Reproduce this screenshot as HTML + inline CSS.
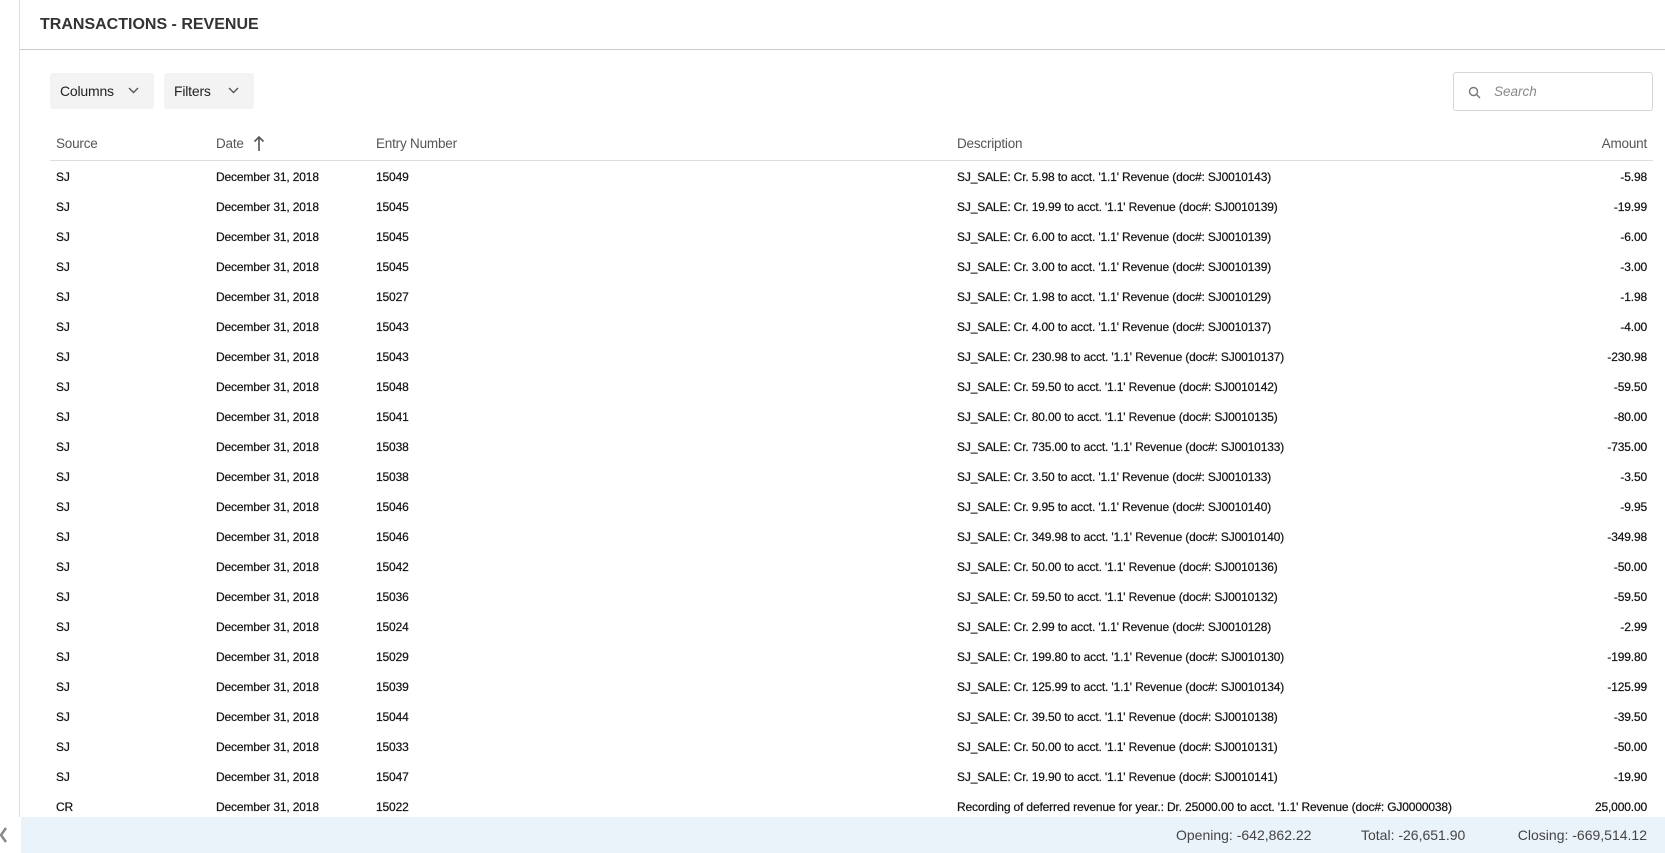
<!DOCTYPE html>
<html><head><meta charset="utf-8"><style>
*{margin:0;padding:0;box-sizing:border-box}
body{width:1665px;height:853px;overflow:hidden;background:#fff;font-family:"Liberation Sans",sans-serif;color:#111;position:relative}
.side{position:absolute;left:0;top:0;width:20px;height:817px;border-right:1px solid #ddd}
.title{position:absolute;left:40px;top:16px;font-size:16px;font-weight:bold;color:#333}
.hl{position:absolute;left:20px;right:0;top:49px;border-top:1px solid #ccc}
.btn{position:absolute;top:73px;height:36px;background:#f3f3f3;border-radius:3px;font-size:14px;line-height:36px;padding-left:10px;color:#222;letter-spacing:-.2px}
.btn svg{position:absolute;top:14px}
.search{position:absolute;left:1453px;top:72px;width:200px;height:39px;border:1px solid #d6d6d6;border-radius:3px}
.search span{position:absolute;left:40px;top:11px;font-style:italic;color:#888;font-size:13.5px}
.th{position:absolute;top:136px;font-size:13.5px;color:#555;letter-spacing:-.2px}
.tl{position:absolute;left:50px;width:1603px;top:160px;border-top:1px solid #ddd}
.r{position:absolute;left:0;width:1665px;height:30px;font-size:12px;line-height:30px;letter-spacing:-.15px;-webkit-text-stroke:.2px #111}
.r span{position:absolute}
.c1{left:56px}.c2{left:216px}.c3{left:376px}.c4{left:957px}.c5{right:18px}
.foot{position:absolute;left:21px;right:0;top:817px;height:36px;background:#eaf2fa;font-size:14px;color:#444}
.foot span{position:absolute;top:10px}
</style></head><body>
<div class="side"></div>
<svg style="position:absolute;left:0;top:826px" width="8" height="18"><path d="M6 2 L1 9 L6 16" stroke="#888" stroke-width="2.5" fill="none"/></svg>
<div class="title">TRANSACTIONS - REVENUE</div>
<div class="hl"></div>
<div class="btn" style="left:50px;width:104px">Columns<svg style="left:78px" width="11" height="7"><path d="M1 1l4.5 4.5L10 1" stroke="#555" stroke-width="1.4" fill="none"/></svg></div>
<div class="btn" style="left:164px;width:90px">Filters<svg style="left:64px" width="11" height="7"><path d="M1 1l4.5 4.5L10 1" stroke="#555" stroke-width="1.4" fill="none"/></svg></div>
<div class="search"><svg style="position:absolute;left:14px;top:13px" width="13" height="13"><circle cx="5.5" cy="5.5" r="4" stroke="#777" stroke-width="1.4" fill="none"/><path d="M8.5 8.5l3.5 3.5" stroke="#777" stroke-width="1.4"/></svg><span>Search</span></div>
<div class="th" style="left:56px">Source</div>
<div class="th" style="left:216px">Date</div>
<svg style="position:absolute;left:253px;top:135px" width="12" height="17"><path d="M6 16V2M1.5 6.5L6 2l4.5 4.5" stroke="#555" stroke-width="1.6" fill="none"/></svg>
<div class="th" style="left:376px">Entry Number</div>
<div class="th" style="left:957px">Description</div>
<div class="th" style="right:18px">Amount</div>
<div class="tl"></div>
<div class="r" style="top:162px"><span class="c1">SJ</span><span class="c2">December 31, 2018</span><span class="c3">15049</span><span class="c4">SJ_SALE: Cr. 5.98 to acct. '1.1' Revenue (doc#: SJ0010143)</span><span class="c5">-5.98</span></div>
<div class="r" style="top:192px"><span class="c1">SJ</span><span class="c2">December 31, 2018</span><span class="c3">15045</span><span class="c4">SJ_SALE: Cr. 19.99 to acct. '1.1' Revenue (doc#: SJ0010139)</span><span class="c5">-19.99</span></div>
<div class="r" style="top:222px"><span class="c1">SJ</span><span class="c2">December 31, 2018</span><span class="c3">15045</span><span class="c4">SJ_SALE: Cr. 6.00 to acct. '1.1' Revenue (doc#: SJ0010139)</span><span class="c5">-6.00</span></div>
<div class="r" style="top:252px"><span class="c1">SJ</span><span class="c2">December 31, 2018</span><span class="c3">15045</span><span class="c4">SJ_SALE: Cr. 3.00 to acct. '1.1' Revenue (doc#: SJ0010139)</span><span class="c5">-3.00</span></div>
<div class="r" style="top:282px"><span class="c1">SJ</span><span class="c2">December 31, 2018</span><span class="c3">15027</span><span class="c4">SJ_SALE: Cr. 1.98 to acct. '1.1' Revenue (doc#: SJ0010129)</span><span class="c5">-1.98</span></div>
<div class="r" style="top:312px"><span class="c1">SJ</span><span class="c2">December 31, 2018</span><span class="c3">15043</span><span class="c4">SJ_SALE: Cr. 4.00 to acct. '1.1' Revenue (doc#: SJ0010137)</span><span class="c5">-4.00</span></div>
<div class="r" style="top:342px"><span class="c1">SJ</span><span class="c2">December 31, 2018</span><span class="c3">15043</span><span class="c4">SJ_SALE: Cr. 230.98 to acct. '1.1' Revenue (doc#: SJ0010137)</span><span class="c5">-230.98</span></div>
<div class="r" style="top:372px"><span class="c1">SJ</span><span class="c2">December 31, 2018</span><span class="c3">15048</span><span class="c4">SJ_SALE: Cr. 59.50 to acct. '1.1' Revenue (doc#: SJ0010142)</span><span class="c5">-59.50</span></div>
<div class="r" style="top:402px"><span class="c1">SJ</span><span class="c2">December 31, 2018</span><span class="c3">15041</span><span class="c4">SJ_SALE: Cr. 80.00 to acct. '1.1' Revenue (doc#: SJ0010135)</span><span class="c5">-80.00</span></div>
<div class="r" style="top:432px"><span class="c1">SJ</span><span class="c2">December 31, 2018</span><span class="c3">15038</span><span class="c4">SJ_SALE: Cr. 735.00 to acct. '1.1' Revenue (doc#: SJ0010133)</span><span class="c5">-735.00</span></div>
<div class="r" style="top:462px"><span class="c1">SJ</span><span class="c2">December 31, 2018</span><span class="c3">15038</span><span class="c4">SJ_SALE: Cr. 3.50 to acct. '1.1' Revenue (doc#: SJ0010133)</span><span class="c5">-3.50</span></div>
<div class="r" style="top:492px"><span class="c1">SJ</span><span class="c2">December 31, 2018</span><span class="c3">15046</span><span class="c4">SJ_SALE: Cr. 9.95 to acct. '1.1' Revenue (doc#: SJ0010140)</span><span class="c5">-9.95</span></div>
<div class="r" style="top:522px"><span class="c1">SJ</span><span class="c2">December 31, 2018</span><span class="c3">15046</span><span class="c4">SJ_SALE: Cr. 349.98 to acct. '1.1' Revenue (doc#: SJ0010140)</span><span class="c5">-349.98</span></div>
<div class="r" style="top:552px"><span class="c1">SJ</span><span class="c2">December 31, 2018</span><span class="c3">15042</span><span class="c4">SJ_SALE: Cr. 50.00 to acct. '1.1' Revenue (doc#: SJ0010136)</span><span class="c5">-50.00</span></div>
<div class="r" style="top:582px"><span class="c1">SJ</span><span class="c2">December 31, 2018</span><span class="c3">15036</span><span class="c4">SJ_SALE: Cr. 59.50 to acct. '1.1' Revenue (doc#: SJ0010132)</span><span class="c5">-59.50</span></div>
<div class="r" style="top:612px"><span class="c1">SJ</span><span class="c2">December 31, 2018</span><span class="c3">15024</span><span class="c4">SJ_SALE: Cr. 2.99 to acct. '1.1' Revenue (doc#: SJ0010128)</span><span class="c5">-2.99</span></div>
<div class="r" style="top:642px"><span class="c1">SJ</span><span class="c2">December 31, 2018</span><span class="c3">15029</span><span class="c4">SJ_SALE: Cr. 199.80 to acct. '1.1' Revenue (doc#: SJ0010130)</span><span class="c5">-199.80</span></div>
<div class="r" style="top:672px"><span class="c1">SJ</span><span class="c2">December 31, 2018</span><span class="c3">15039</span><span class="c4">SJ_SALE: Cr. 125.99 to acct. '1.1' Revenue (doc#: SJ0010134)</span><span class="c5">-125.99</span></div>
<div class="r" style="top:702px"><span class="c1">SJ</span><span class="c2">December 31, 2018</span><span class="c3">15044</span><span class="c4">SJ_SALE: Cr. 39.50 to acct. '1.1' Revenue (doc#: SJ0010138)</span><span class="c5">-39.50</span></div>
<div class="r" style="top:732px"><span class="c1">SJ</span><span class="c2">December 31, 2018</span><span class="c3">15033</span><span class="c4">SJ_SALE: Cr. 50.00 to acct. '1.1' Revenue (doc#: SJ0010131)</span><span class="c5">-50.00</span></div>
<div class="r" style="top:762px"><span class="c1">SJ</span><span class="c2">December 31, 2018</span><span class="c3">15047</span><span class="c4">SJ_SALE: Cr. 19.90 to acct. '1.1' Revenue (doc#: SJ0010141)</span><span class="c5">-19.90</span></div>
<div class="r" style="top:792px"><span class="c1">CR</span><span class="c2">December 31, 2018</span><span class="c3">15022</span><span class="c4">Recording of deferred revenue for year.: Dr. 25000.00 to acct. '1.1' Revenue (doc#: GJ0000038)</span><span class="c5">25,000.00</span></div>
<div class="foot"><span style="left:1155px">Opening: -642,862.22</span><span style="left:1340px">Total: -26,651.90</span><span style="right:18px">Closing: -669,514.12</span></div>
</body></html>
